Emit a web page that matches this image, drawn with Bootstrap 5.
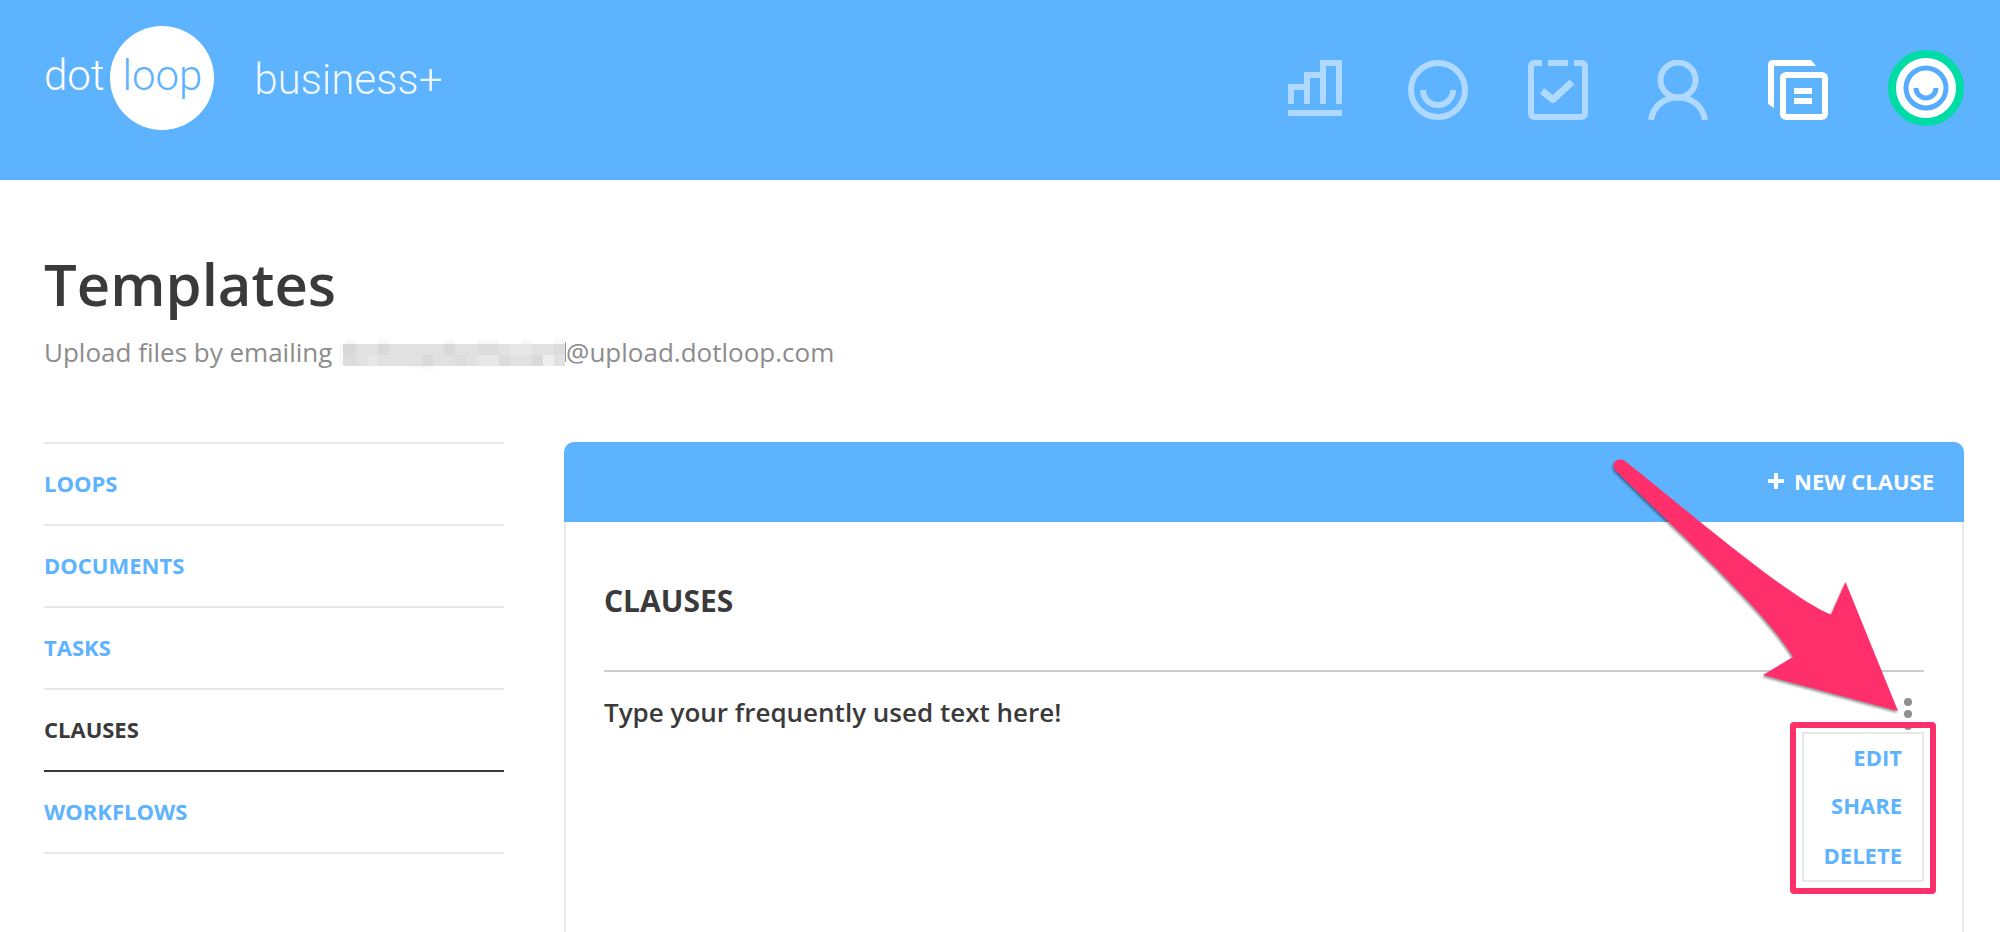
<!DOCTYPE html>
<html lang="en">
<head>
<meta charset="utf-8">
<meta name="viewport" content="width=device-width, initial-scale=1">
<title>Templates</title>
<link rel="stylesheet" href="https://cdn.jsdelivr.net/npm/bootstrap@5.3.0/dist/css/bootstrap.min.css">
<style>
  :root { --sky: #5eb3ff; --ink: #3a3a3a; --rule: #e8e8e8; --pink: #ff2f6c; }
  body { font-family: "Open Sans", sans-serif; color: var(--ink); background: #fff; }
  a { text-decoration: none; }

  .topbar { background: var(--sky); min-height: 180px; padding: 26px 36px 50px 44px; }
  .brand, .plan { font: 300 42px/52px Roboto, sans-serif; color: #fff; }
  .brand { gap: 6px; }
  .brand-disc { width: 104px; height: 104px; border-radius: 50%; background: #fff; color: var(--sky); line-height: 100px; }
  .plan { margin: 4px 0 0 40px; opacity: .9; }
  .icon-nav { gap: 60px; }
  .icon-nav a { color: #fff; }
  .icon-nav .tool { padding-top: 4px; opacity: .5; }
  .icon-nav .tool.active { opacity: 1; }
  .icon-nav svg { display: block; fill: none; stroke: currentColor; stroke-width: 6; }

  .page { padding: 64px 36px 0 44px; }
  h1 { font-size: 58px; line-height: 80px; font-weight: 600; margin: 0 0 8px; }
  .intro { font-size: 26px; line-height: 40px; color: #8c8c8c; margin: 0 0 70px; }
  .columns { display: grid; grid-template-columns: 23fr 70fr; column-gap: 60px; }

  .side { border-top: 2px solid var(--rule); align-self: start; }
  .side a { font-size: 22px; line-height: 78px; font-weight: 700; color: var(--sky); padding: 0 0 2px; border-bottom: 2px solid var(--rule); }
  .side a.active { color: var(--ink); border-color: var(--ink); }

  .panel-head { height: 80px; background: var(--sky); border-radius: 10px 10px 0 0; padding: 0 30px 2px 0; }
  .panel-head button { font-size: 22px; line-height: 30px; font-weight: 700; color: #fff; gap: 10px; }
  .panel-main { border: solid var(--rule); border-width: 0 2px; padding: 59px 38px 0; }
  h2 { font-size: 30px; line-height: 40px; font-weight: 700; margin: 0 0 49px; }
  .clause { border-top: 2px solid #ccc; padding: 20px 0; }
  .clause p { font-size: 26px; line-height: 40px; font-weight: 600; margin: 0; }
  .dots { width: 32px; height: 40px; }

  .callout { position: absolute; top: 50px; right: -12px; border: 6px solid var(--pink); border-radius: 4px; padding: 4px 6px 6px; }
  .actions { width: 122px; border: 2px solid var(--rule); background: #fff; }
  .actions button { font-size: 22px; line-height: 46px; font-weight: 700; color: var(--sky); padding: 0 20px 2px 0; text-align: right; border: 0; border-radius: 0; }
  .actions .delete { border-top: 2px solid #fff; }
  .arrow { position: absolute; right: 20px; bottom: 36px; width: 300px; height: 260px; filter: drop-shadow(-1px 2px 1px rgba(0,0,0,.4)); pointer-events: none; }
</style>
<script src="https://cdn.jsdelivr.net/npm/bootstrap@5.3.0/dist/js/bootstrap.bundle.min.js"></script>
</head>
<body class="d-flex flex-column min-vh-100">

<header class="topbar d-flex justify-content-between align-items-start">
  <div class="d-flex align-items-center">
    <a href="#" class="brand d-flex align-items-center"><span class="pb-1">dot</span><span class="brand-disc text-center">loop</span></a>
    <span class="plan">business+</span>
  </div>
  <nav class="icon-nav d-flex align-items-center mt-4" aria-label="Main">
    <a href="#" class="tool" aria-label="Reports">
      <svg width="60" height="60" viewBox="0 0 60 60"><path d="M3 44V27H19V44M19 27V15H35V44M35 15V3H51V44M0 53H54"/></svg>
    </a>
    <a href="#" class="tool" aria-label="Loops">
      <svg width="60" height="60" viewBox="0 0 60 60"><circle cx="30" cy="30" r="27"/><path d="M15 30a15 15 0 0 0 30 0"/></svg>
    </a>
    <a href="#" class="tool" aria-label="Tasks">
      <svg width="60" height="60" viewBox="0 0 60 60"><path d="M14 3H7Q3 3 3 7V53Q3 57 7 57H53Q57 57 57 53V7Q57 3 53 3H46M20 3H40"/><path d="M14 31L25 39.500L44 22" stroke-width="7" stroke-linejoin="round"/></svg>
    </a>
    <a href="#" class="tool" aria-label="People">
      <svg width="60" height="60" viewBox="0 0 60 60"><ellipse cx="30" cy="20" rx="17.5" ry="17.5"/><path d="M3 60C5 47 15 37.500 30 37.500S55 47 57 60"/></svg>
    </a>
    <a href="#" class="tool active" aria-label="Templates">
      <svg width="60" height="60" viewBox="0 0 60 60"><path d="M0 5Q0 0 5 0H43L48 6H6V48L0 44Z" fill="currentColor" stroke="none"/><rect x="15" y="15" width="42" height="42" rx="3"/><path d="M26 31H44M26 41H44"/></svg>
    </a>
    <a href="#" aria-label="Profile">
      <svg width="76" height="76" viewBox="0 0 76 76"><circle cx="38" cy="38" r="34" fill="#fff" stroke="#00dca5" stroke-width="8"/><circle cx="38" cy="38" r="20" stroke="#55acff" stroke-width="5"/><path d="M28 38a10 10 0 0 0 20 0" stroke="#55acff" stroke-width="5"/></svg>
    </a>
  </nav>
</header>

<main class="page d-flex flex-column flex-grow-1">
  <h1>Templates</h1>
  <p class="intro">Upload files by emailing <svg width="227" height="32" viewBox="-1 0 227 32" style="vertical-align:-9px" shape-rendering="crispEdges" aria-label="hidden address"><path fill="#f9f9f9" d="M-1 5h5v22H-1zM5 0h11v5H5zM38 0h11v5H38zM104 0h11v5H104zM137 0h22v5H137zM181 0h11v5H181zM214 0h11v5H214zM82 27h11v5H82zM71 27h11v2H71z"/><path fill="#e1e1e1" d="M3 5H225V27H3z"/><path fill="#d9d9d9" d="M3 5h13v11H3zM38 5h11v11H38zM104 5h11v11H104zM82 16h11v11H82zM192 16h11v11H192z"/><path fill="#dcdcdc" d="M137 5h22v11H137zM214 5h11v11H214zM115 16h11v11H115zM159 16h11v11H159zM3 16h13v11H3z"/><path fill="#e7e7e7" d="M181 5h11v11H181zM27 16h11v11H27zM137 16h22v11H137zM170 5h11v11H170z"/><path fill="#eee" d="M203 16h11v11H203z"/><path fill="#999" d="M225 3h1v20h-1z"/></svg>@upload.dotloop.com</p>

  <div class="columns flex-grow-1">
    <nav class="side nav flex-column" aria-label="Template types">
      <a class="nav-link" href="#">LOOPS</a>
      <a class="nav-link" href="#">DOCUMENTS</a>
      <a class="nav-link" href="#">TASKS</a>
      <a class="nav-link active" href="#" aria-current="page">CLAUSES</a>
      <a class="nav-link" href="#">WORKFLOWS</a>
    </nav>

    <section class="d-flex flex-column">
      <div class="panel-head d-flex justify-content-end align-items-center">
        <button type="button" class="btn border-0 p-0 d-flex align-items-center"><svg width="16" height="16" viewBox="0 0 16 16"><path d="M0 8H16M8 0V16" stroke="#fff" stroke-width="4"/></svg>NEW CLAUSE</button>
      </div>
      <div class="panel-main flex-grow-1">
        <h2>CLAUSES</h2>
        <div class="clause position-relative d-flex justify-content-between">
          <p>Type your frequently used text here!</p>
          <button type="button" class="dots btn border-0 p-0 d-flex justify-content-center" aria-label="Clause actions">
            <svg width="8" height="40" viewBox="0 0 8 40" fill="#8f8f8f"><circle cx="4" cy="10" r="4"/><circle cx="4" cy="22" r="4"/><circle cx="4" cy="34" r="4"/></svg>
          </button>
          <div class="callout">
            <div class="actions d-flex flex-column">
              <button type="button" class="btn">EDIT</button>
              <button type="button" class="btn">SHARE</button>
              <button type="button" class="btn delete">DELETE</button>
            </div>
          </div>
          <svg class="arrow" viewBox="1604 456 300 260" aria-hidden="true"><path fill="#ff2f6c" d="M1625 461C1616 456 1610 465 1616 471C1677 531 1764 609 1793 657L1763 675L1898 711L1845.500 582L1831 614.500C1789 598 1688 511 1625 461Z"/></svg>
        </div>
      </div>
    </section>
  </div>
</main>
</body>
</html>
